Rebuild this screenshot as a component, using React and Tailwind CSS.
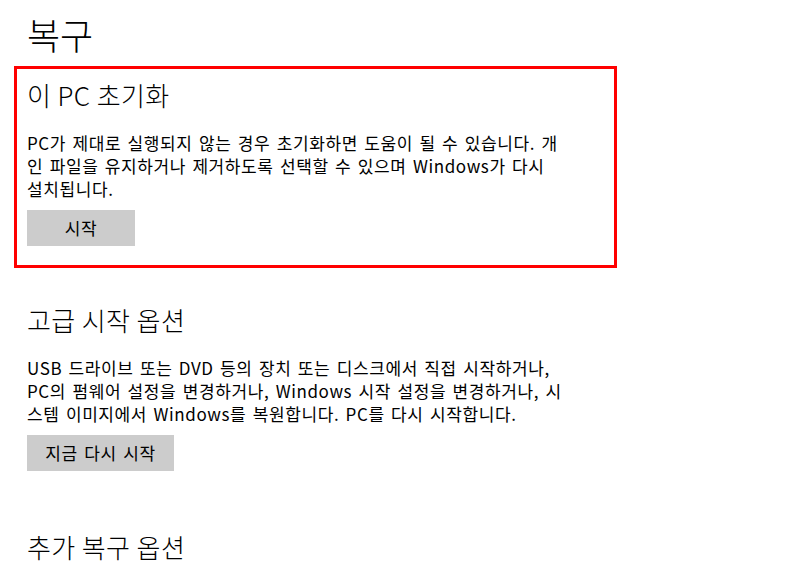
import React from 'react';

const font = { fontFamily: '"Noto Sans CJK KR", "Noto Sans", sans-serif' };

const Section = ({ title, lines, button, btnWidth }) => (
  <div>
    <h2 className="text-[26px] leading-[32px] font-light text-black tracking-[0.4px]">{title}</h2>
    <p className="mt-[20px] text-[17px] leading-[23px] text-black tracking-[0.6px] [word-spacing:2px]">
      {lines.map((l, i) => (
        <React.Fragment key={i}>
          {l}
          {i < lines.length - 1 && <br />}
        </React.Fragment>
      ))}
    </p>
    <button className={`mt-[10px] h-[36px] ${btnWidth} bg-[#cccccc] text-[17px] tracking-[0.6px] [word-spacing:2px] text-black`}>{button}</button>
  </div>
);

export default function App() {
  return (
    <div className="w-[800px] h-[582px] bg-white overflow-hidden" style={font}>
      <h1 className="pl-[27px] pt-[11px] text-[36px] leading-[46px] font-light text-black">복구</h1>
      <div className="ml-[14px] mt-[9px] w-[603px] h-[202px] border-[3px] border-[#ff0000] pl-[10px] pt-[10px]">
        <Section
          title="이 PC 초기화"
          lines={[
            'PC가 제대로 실행되지 않는 경우 초기화하면 도움이 될 수 있습니다. 개',
            '인 파일을 유지하거나 제거하도록 선택할 수 있으며 Windows가 다시',
            '설치됩니다.',
          ]}
          button="시작"
          btnWidth="w-[108px]"
        />
      </div>
      <div className="pl-[27px] mt-[36px]">
        <Section
          title="고급 시작 옵션"
          lines={[
            'USB 드라이브 또는 DVD 등의 장치 또는 디스크에서 직접 시작하거나,',
            'PC의 펌웨어 설정을 변경하거나, Windows 시작 설정을 변경하거나, 시',
            '스템 이미지에서 Windows를 복원합니다. PC를 다시 시작합니다.',
          ]}
          button="지금 다시 시작"
          btnWidth="w-[147px]"
        />
        <h2 className="mt-[60px] text-[26px] leading-[32px] font-light text-black tracking-[0.4px]">추가 복구 옵션</h2>
      </div>
    </div>
  );
}
